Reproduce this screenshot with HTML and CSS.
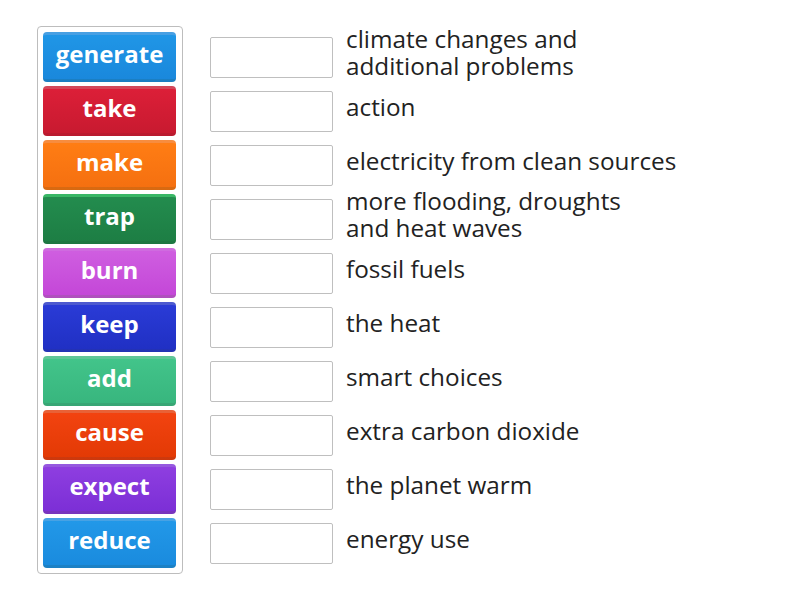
FILE: index.html
```html
<!DOCTYPE html>
<html lang="en">
<head>
    <meta charset="UTF-8">
    <title>Match up</title>
    <link rel="stylesheet" href="styles.css">
</head>
<body>
    <div class="game">
        <!-- Word tiles -->
        <div class="board">
            <div class="tile generate">generate</div>
            <div class="tile take">take</div>
            <div class="tile make">make</div>
            <div class="tile trap">trap</div>
            <div class="tile burn">burn</div>
            <div class="tile keep">keep</div>
            <div class="tile add">add</div>
            <div class="tile cause">cause</div>
            <div class="tile expect">expect</div>
            <div class="tile reduce">reduce</div>
        </div>

        <!-- Drop targets -->
        <div class="targets">
            <div class="row"><div class="slot"></div><p>climate changes and<br>additional problems</p></div>
            <div class="row"><div class="slot"></div><p>action</p></div>
            <div class="row"><div class="slot"></div><p>electricity from clean sources</p></div>
            <div class="row"><div class="slot"></div><p>more flooding, droughts<br>and heat waves</p></div>
            <div class="row"><div class="slot"></div><p>fossil fuels</p></div>
            <div class="row"><div class="slot"></div><p>the heat</p></div>
            <div class="row"><div class="slot"></div><p>smart choices</p></div>
            <div class="row"><div class="slot"></div><p>extra carbon dioxide</p></div>
            <div class="row"><div class="slot"></div><p>the planet warm</p></div>
            <div class="row"><div class="slot"></div><p>energy use</p></div>
        </div>
    </div>
</body>
</html>
```

FILE: styles.css
```css
* {
    margin: 0;
    padding: 0;
    box-sizing: border-box;
    font-family: 'Open Sans', sans-serif;
}

body {
    background: #fff;
    width: 800px;
    height: 600px;
    overflow: hidden;
}

.game {
    display: flex;
    align-items: flex-start;
    gap: 27px;
    padding: 26px 0 0 37px;
}

.board {
    display: flex;
    flex-direction: column;
    gap: 4px;
    width: 146px;
    padding: 5px 6px 5px 5px;
    border: 1px solid #bdbdbd;
    border-radius: 4px;
}

.tile {
    height: 50px;
    width: 133px;
    display: flex;
    align-items: center;
    justify-content: center;
    color: #fff;
    font-size: 24px;
    font-weight: 700;
    border-radius: 4px;
    border-top: 3px solid rgba(255, 255, 255, 0.2);
    border-bottom: 3px solid rgba(0, 0, 0, 0.15);
    padding-bottom: 7px;
}

.generate { background: linear-gradient(#2096e6, #1a88dc); }
.take     { background: linear-gradient(#dc1f38, #c81a30); }
.make     { background: linear-gradient(#ff7d14, #f57010); }
.trap     { background: linear-gradient(#238c4e, #1d7e44); border-top-color: rgba(80, 230, 130, 0.55); }
.burn     { background: linear-gradient(#cf5ee0, #c447d8); }
.keep     { background: linear-gradient(#2a3bd6, #2030c4); }
.add      { background: linear-gradient(#42c48a, #38b67e); }
.cause    { background: linear-gradient(#f24310, #e33a05); }
.expect   { background: linear-gradient(#8e3ee0, #7c2fd6); }
.reduce   { background: linear-gradient(#2298e8, #1a8bde); }

.targets {
    display: flex;
    flex-direction: column;
    gap: 4px;
    padding-top: 6px;
}

.row {
    height: 50px;
    display: flex;
    align-items: center;
    gap: 13px;
}

.slot {
    width: 123px;
    height: 41px;
    border: 1px solid #bfbfbf;
    border-radius: 2px;
    background: #fff;
    flex-shrink: 0;
}

.row p {
    font-size: 24.3px;
    line-height: 27px;
    color: #222;
    padding-bottom: 10px;
}
```
